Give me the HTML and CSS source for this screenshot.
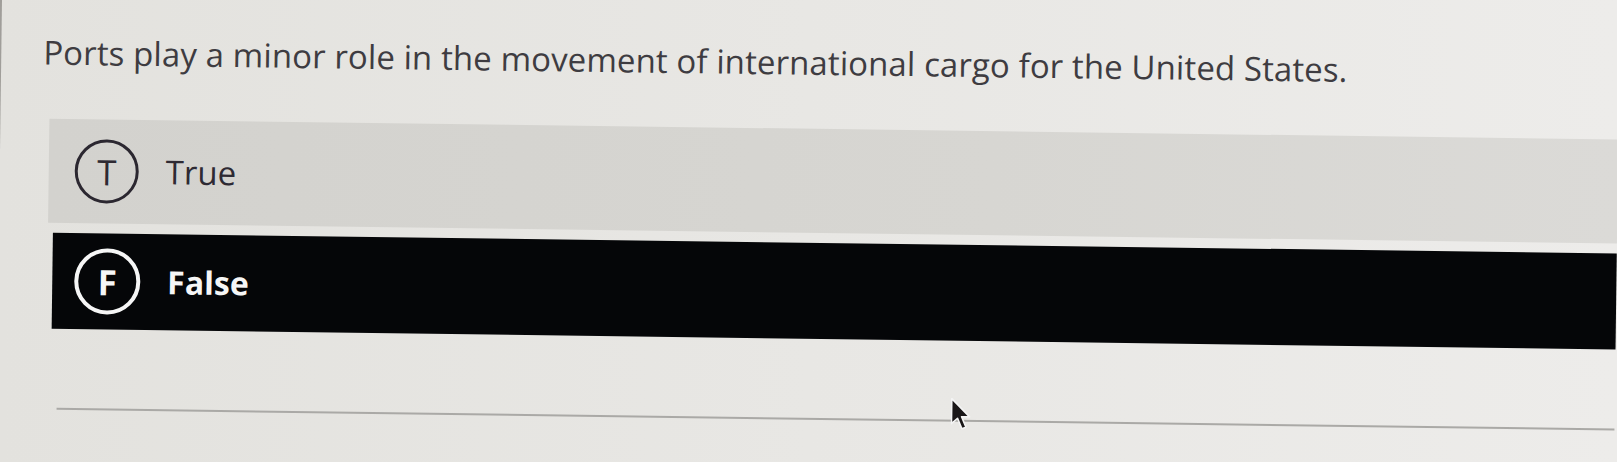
FILE: index.html
```html
<!DOCTYPE html>
<html lang="en">
<head>
<meta charset="utf-8">
<title>Question</title>
<link rel="stylesheet" href="styles.css">
</head>
<body>
<div class="screen">
  <p class="question">Ports play a minor role in the movement of international cargo for the United States.</p>
  <div class="choices">
    <div class="choice choice-idle">
      <span class="badge">T</span>
      <span class="label">True</span>
    </div>
    <div class="choice choice-selected">
      <span class="badge">F</span>
      <span class="label">False</span>
    </div>
  </div>
  <div class="divider"></div>
  <svg class="cursor" width="22" height="34" viewBox="0 0 22 34" aria-hidden="true">
    <path d="M1 1 L1 26 L7 20.5 L11.5 31 L15.5 29.3 L11 19 L19 19 Z" fill="#1a1718" stroke="#f4f4f4" stroke-width="1.6" stroke-linejoin="round"/>
  </svg>
</div>
</body>
</html>
```

FILE: styles.css
```css
html, body {
  margin: 0;
  padding: 0;
  height: 100%;
  overflow: hidden;
}

body {
  background: linear-gradient(90deg, #e3e2de 0%, #e8e7e4 50%, #edecea 100%);
  font-family: "Open Sans", "Liberation Sans", sans-serif;
}

.screen {
  position: relative;
  width: 1620px;
  height: 440px;
  transform: rotate(0.76deg);
  transform-origin: 0 0;
  border-left: 2px solid #a09e9a;
  box-sizing: border-box;
}

.question {
  margin: 0;
  padding: 30px 0 0 42px;
  font-size: 33px;
  line-height: 44px;
  letter-spacing: 0.1px;
  color: #3e3c41;
  white-space: nowrap;
}

.choices {
  display: flex;
  flex-direction: column;
  gap: 10px;
  margin-top: 44px;
}

.choice {
  display: flex;
  align-items: center;
  gap: 27px;
}

.choice-idle {
  margin-left: 49px;
  height: 104px;
  padding-left: 26px;
  background: linear-gradient(90deg, #d3d2ce 0%, #d7d6d2 60%, #dbdad7 100%);
  color: #2e2a33;
}

.choice-selected {
  margin-left: 54px;
  height: 96px;
  padding-left: 22px;
  background: #050608;
  color: #f6f6f6;
  font-weight: 700;
}

.badge {
  box-sizing: border-box;
  width: 64px;
  height: 64px;
  border-radius: 50%;
  display: flex;
  align-items: center;
  justify-content: center;
  font-size: 35px;
  line-height: 1;
  flex: none;
}

.choice-idle .badge {
  border: 3px solid #2b2730;
  font-weight: 500;
}

.choice-selected .badge {
  width: 66px;
  height: 66px;
  border: 4px solid #f6f6f6;
  font-weight: 700;
}

.label {
  font-size: 33px;
  line-height: 44px;
}

.choice-selected .label {
  font-size: 32px;
}

.divider {
  margin: 79px 0 0 60px;
  height: 2px;
  background: #aaa9a6;
}

.cursor {
  position: absolute;
  left: 954px;
  top: 385px;
}
```
